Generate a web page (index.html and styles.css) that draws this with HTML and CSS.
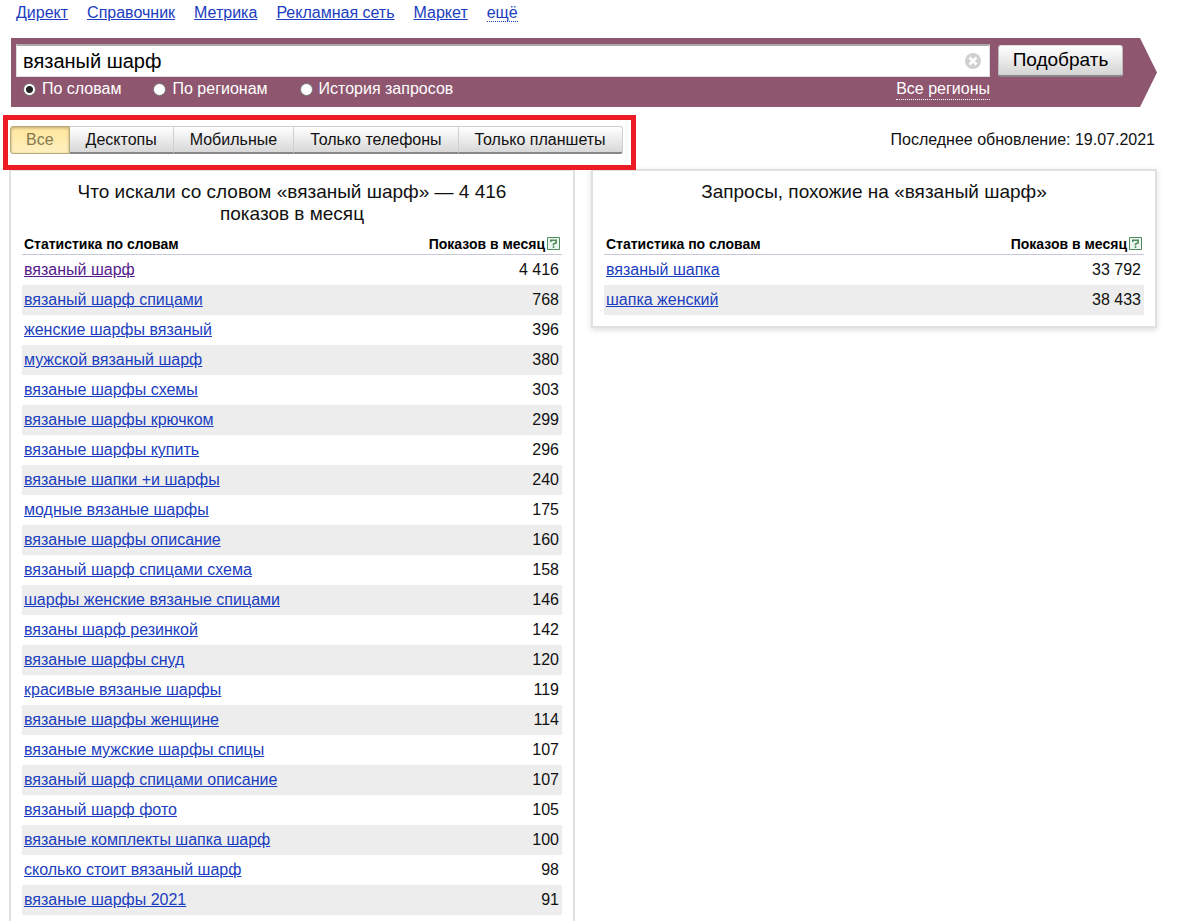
FILE: index.html
```html
<!DOCTYPE html>
<html lang="ru">
<head>
<meta charset="utf-8">
<title>Подбор слов</title>
<link rel="stylesheet" href="styles.css">
</head>
<body class="page">
<nav class="services">
  <a href="#">Директ</a>
  <a href="#">Справочник</a>
  <a href="#">Метрика</a>
  <a href="#">Рекламная сеть</a>
  <a href="#">Маркет</a>
  <a href="#" class="more">ещё</a>
</nav>

<form class="search">
  <div class="query">
    <div class="field">
      <input class="text" type="text" value="вязаный шарф" aria-label="Запрос">
      <button class="clear" type="button" aria-label="Очистить">
        <svg width="16" height="16" viewBox="0 0 16 16"><circle cx="8" cy="8" r="8" fill="#d0d0d0"/><path d="M4.5 4.5l7 7M11.5 4.5l-7 7" stroke="#fff" stroke-width="2.6"/></svg>
      </button>
    </div>
    <div class="options">
      <label><input type="radio" name="mode" checked>По словам</label>
      <label><input type="radio" name="mode">По регионам</label>
      <label><input type="radio" name="mode">История запросов</label>
      <a href="#" class="regions">Все регионы</a>
    </div>
  </div>
  <button class="submit" type="submit">Подобрать</button>
</form>

<div class="toolbar">
  <div class="frame">
    <div class="tabs">
      <button type="button" class="tab active">Все</button>
      <button type="button" class="tab">Десктопы</button>
      <button type="button" class="tab">Мобильные</button>
      <button type="button" class="tab">Только телефоны</button>
      <button type="button" class="tab">Только планшеты</button>
    </div>
  </div>
  <p class="updated">Последнее обновление: 19.07.2021</p>
</div>

<main class="columns">
  <section class="panel continued">
    <h2 class="title">Что искали со словом «вязаный шарф» — 4 416 показов в месяц</h2>
    <table class="stats">
      <thead><tr><th>Статистика по словам</th><th>Показов в месяц<svg class="help" width="13" height="13" viewBox="0 0 13 13"><path d="M.5.5h12v12H.5z" fill="#edf6ee" stroke="#4f8a5c"/><path d="M3.8 5V3.2h5.4v2.6L6.5 7v1.4M6.5 9.2v1.8" fill="none" stroke="#4f8a5c" stroke-width="1.6"/></svg></th></tr></thead>
      <tbody>
        <tr><td><a href="#" class="visited">вязаный шарф</a></td><td>4 416</td></tr>
        <tr><td><a href="#">вязаный шарф спицами</a></td><td>768</td></tr>
        <tr><td><a href="#">женские шарфы вязаный</a></td><td>396</td></tr>
        <tr><td><a href="#">мужской вязаный шарф</a></td><td>380</td></tr>
        <tr><td><a href="#">вязаные шарфы схемы</a></td><td>303</td></tr>
        <tr><td><a href="#">вязаные шарфы крючком</a></td><td>299</td></tr>
        <tr><td><a href="#">вязаные шарфы купить</a></td><td>296</td></tr>
        <tr><td><a href="#">вязаные шапки +и шарфы</a></td><td>240</td></tr>
        <tr><td><a href="#">модные вязаные шарфы</a></td><td>175</td></tr>
        <tr><td><a href="#">вязаные шарфы описание</a></td><td>160</td></tr>
        <tr><td><a href="#">вязаный шарф спицами схема</a></td><td>158</td></tr>
        <tr><td><a href="#">шарфы женские вязаные спицами</a></td><td>146</td></tr>
        <tr><td><a href="#">вязаны шарф резинкой</a></td><td>142</td></tr>
        <tr><td><a href="#">вязаные шарфы снуд</a></td><td>120</td></tr>
        <tr><td><a href="#">красивые вязаные шарфы</a></td><td>119</td></tr>
        <tr><td><a href="#">вязаные шарфы женщине</a></td><td>114</td></tr>
        <tr><td><a href="#">вязаные мужские шарфы спицы</a></td><td>107</td></tr>
        <tr><td><a href="#">вязаный шарф спицами описание</a></td><td>107</td></tr>
        <tr><td><a href="#">вязаный шарф фото</a></td><td>105</td></tr>
        <tr><td><a href="#">вязаные комплекты шапка шарф</a></td><td>100</td></tr>
        <tr><td><a href="#">сколько стоит вязаный шарф</a></td><td>98</td></tr>
        <tr><td><a href="#">вязаные шарфы 2021</a></td><td>91</td></tr>
      </tbody>
    </table>
  </section>
  <section class="panel">
    <h2 class="title">Запросы, похожие на «вязаный шарф»</h2>
    <table class="stats">
      <thead><tr><th>Статистика по словам</th><th>Показов в месяц<svg class="help" width="13" height="13" viewBox="0 0 13 13"><path d="M.5.5h12v12H.5z" fill="#edf6ee" stroke="#4f8a5c"/><path d="M3.8 5V3.2h5.4v2.6L6.5 7v1.4M6.5 9.2v1.8" fill="none" stroke="#4f8a5c" stroke-width="1.6"/></svg></th></tr></thead>
      <tbody>
        <tr><td><a href="#">вязаный шапка</a></td><td>33 792</td></tr>
        <tr><td><a href="#">шапка женский</a></td><td>38 433</td></tr>
      </tbody>
    </table>
  </section>
</main>
</body>
</html>
```
FILE: styles.css
```css
* { box-sizing: border-box; }

.page {
  display: flex;
  flex-direction: column;
  min-height: 100vh;
  margin: 0;
  padding: 0 40px 0 9px;
  background: #fff;
  color: #111;
  font: 16px/20px "Liberation Sans", Arial, sans-serif;
}

a { color: #1a3dc1; }

.services {
  display: flex;
  gap: 19px;
  height: 38px;
  padding: 3px 0 0 7px;
}
.services a { height: 20px; }
.services .more {
  height: 19px;
  text-decoration: none;
  border-bottom: 1px dotted #1a3dc1;
}

.search {
  display: flex;
  align-items: flex-start;
  gap: 8px;
  margin-left: 2px;
  padding: 6px 34px 6px 5px;
  background: #8f566f;
  clip-path: polygon(0 0, calc(100% - 17px) 0, 100% 50%, calc(100% - 17px) 100%, 0 100%);
}
.query { flex: 1; }
.field {
  display: flex;
  align-items: center;
  height: 33px;
  padding: 0 8px 1px 6px;
  background: #fff;
  border: 1px solid #ddd;
  border-top: 2px solid #aaa;
}
.text {
  flex: 1;
  min-width: 0;
  padding: 0;
  border: 0;
  outline: 0;
  background: none;
  color: #000;
  font: 20px/24px "Liberation Sans", Arial, sans-serif;
}
.clear {
  display: flex;
  padding: 0;
  border: 0;
  background: none;
}
.options {
  display: flex;
  gap: 32px;
  height: 24px;
  padding: 2px 0 0 7px;
  color: #fff;
}
.options label {
  display: flex;
  align-items: center;
  gap: 6px;
  height: 20px;
}
.options input {
  appearance: none;
  width: 13px;
  height: 13px;
  margin: 0;
  border: 1px solid #777;
  border-radius: 50%;
  background: #fff;
}
.options input:checked {
  background: radial-gradient(circle, #222 0 3px, #fff 4px);
}
.regions {
  height: 21px;
  margin-left: auto;
  color: #fff;
  text-decoration: none;
  border-bottom: 1px dotted #fff;
}
.submit {
  width: 125px;
  height: 32px;
  margin-top: 1px;
  padding: 0 0 2px;
  border: 1px solid #bbb;
  border-top-color: #ddd;
  border-bottom: 2px solid #888;
  border-radius: 3px;
  background: linear-gradient(#fff, #d4d4d4);
  color: #000;
  font: 19px/24px "Liberation Sans", Arial, sans-serif;
}

.toolbar {
  display: flex;
  justify-content: space-between;
  margin: 8px 0 -1px -6px;
}
.frame {
  position: relative;
  z-index: 1;
  padding: 6px 8px 11px 2px;
  border: 5px solid #ed1c24;
}
.tabs { display: flex; }
.tab {
  height: 28px;
  padding: 0 16px;
  border: 1px solid #d0d0d0;
  border-left: 0;
  border-bottom: 2px solid #888;
  background: linear-gradient(#fff, #d8d8d8);
  color: #111;
  font: 16px/20px "Liberation Sans", Arial, sans-serif;
}
.tab.active {
  padding: 0 15px;
  border: 1px solid #b9a878;
  border-radius: 3px 0 0 3px;
  background: linear-gradient(#ffe69c, #fff0c0);
  box-shadow: inset 0 1px 3px #b9a878;
  color: #85794f;
}
.tab:last-child { border-radius: 0 3px 3px 0; }
.updated {
  margin: 15px 2px 0 0;
}

.columns {
  display: grid;
  grid-template-columns: minmax(0, 1fr) minmax(0, 1fr);
  gap: 16px;
  align-items: start;
  flex: 1;
}
.panel {
  padding: 10px 11px 11px;
  border: 2px solid #e0e0e0;
  box-shadow: 0 2px 6px #ddd;
}
.continued {
  align-self: stretch;
  padding-bottom: 0;
  border-bottom: 0;
  box-shadow: none;
}
.title {
  min-height: 44px;
  margin: 0 40px 8px;
  font-size: 19px;
  line-height: 22px;
  font-weight: normal;
  text-align: center;
}
.stats {
  width: 100%;
  border-collapse: separate;
  border-spacing: 0;
}
.stats th {
  height: 22px;
  padding: 0 2px;
  border-bottom: 1px solid #c8c8d8;
  color: #000;
  font-size: 14px;
  line-height: 20px;
  text-align: left;
  white-space: nowrap;
}
.stats th + th { text-align: right; }
.help {
  margin-left: 2px;
  vertical-align: -1px;
}
.stats td {
  height: 30px;
  padding: 0 3px 0 2px;
}
.stats td + td { text-align: right; }
.stats tbody tr:nth-child(even) { background: #ededed; }
.stats .visited { color: #551a8b; }
```
